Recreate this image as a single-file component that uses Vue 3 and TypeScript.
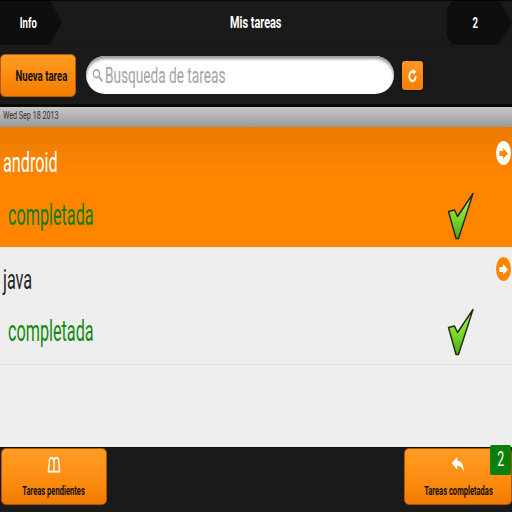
<template>
  <div class="page">
    <header class="header">
      <div class="nav-btn nav-info"><span class="squeeze">Info</span></div>
      <h1 class="title"><span class="squeeze">Mis tareas</span></h1>
      <div class="nav-btn nav-count"><span class="squeeze">2</span></div>
    </header>

    <div class="toolbar">
      <button class="new-btn"><span class="squeeze">Nueva tarea</span></button>
      <div class="search">
        <svg class="search-icon" viewBox="0 0 16 16" width="11" height="14" preserveAspectRatio="none">
          <circle cx="6.5" cy="6.5" r="4.5" fill="none" stroke="#a8a8a8" stroke-width="2" />
          <path d="M10 10l4.5 4.5" stroke="#a8a8a8" stroke-width="2.6" stroke-linecap="round" />
        </svg>
        <span class="search-text squeeze">Busqueda de tareas</span>
      </div>
      <button class="refresh-btn">
        <svg viewBox="0 0 14 18" width="9" height="17" preserveAspectRatio="none">
          <path d="M10.500 6.200A5 5 0 1 0 12 9.500" fill="none" stroke="#fff" stroke-width="2.6" />
          <path d="M7.600 1.500l5.200 3.600-4.800 3z" fill="#fff" />
        </svg>
      </button>
    </div>

    <div class="date-bar"><span class="squeeze">Wed Sep 18 2013</span></div>

    <ul class="tasks">
      <li v-for="task in tasks" :key="task.name" class="task" :class="{ active: task.active }">
        <div class="task-name"><span class="squeeze">{{ task.name }}</span></div>
        <div class="task-status">
          <span class="squeeze">completada</span>
          <svg class="check" viewBox="0 0 28 48" width="28" height="48">
            <defs>
              <linearGradient :id="'chk-' + task.name" x1="0" y1="0" x2="0" y2="1">
                <stop offset="0" stop-color="#b4f060" />
                <stop offset="0.6" stop-color="#74d326" />
                <stop offset="1" stop-color="#4aa915" />
              </linearGradient>
            </defs>
            <path d="M1.500 19.500l6-1.500 3 6.500L26 1.500 11.500 46.500h-2.500z" :fill="'url(#chk-' + task.name + ')'"
              stroke="#1d2a10" stroke-width="1.400" stroke-linejoin="round" />
          </svg>
        </div>
        <span class="arrow">
          <svg viewBox="0 0 12 12" width="11" height="13" preserveAspectRatio="none">
            <path d="M1.500 3.800h4V1L11 6l-5.500 5V8.200h-4z" :fill="task.active ? '#ff8a00' : '#fff'" />
          </svg>
        </span>
      </li>
    </ul>

    <footer class="footer">
      <button class="foot-btn">
        <svg viewBox="0 0 20 18" width="14" height="17" preserveAspectRatio="none">
          <path d="M10 5C9 1 4.500 1 3.500 4L2 16.500H18L16.500 4C15.500 1 11 1 10 5zM10 5v11.500" fill="none" stroke="#fff"
            stroke-width="2" stroke-linejoin="round" />
        </svg>
        <span class="squeeze">Tareas pendientes</span>
      </button>
      <button class="foot-btn foot-done">
        <svg viewBox="0 0 20 18" width="14" height="17" preserveAspectRatio="none">
          <path d="M1 7.500L9 1v4c6 0 9 4 9.500 12C16.500 12.500 13.500 10.500 9 10.500v4z" fill="#fff" />
        </svg>
        <span class="squeeze">Tareas completadas</span>
        <span class="badge"><span class="squeeze">2</span></span>
      </button>
    </footer>
  </div>
</template>

<script setup lang="ts">
const tasks: Array<{ name: string; active: boolean }> = [
  { name: 'android', active: true },
  { name: 'java', active: false },
];
</script>

<style>
html, body { margin: 0; background: #1a1a1a; }
</style>

<style scoped>
.page {
  width: 512px;
  height: 512px;
  display: flex;
  flex-direction: column;
  overflow: hidden;
  font-family: Roboto, "Liberation Sans", sans-serif;
  background: #1a1a1a;
}

.squeeze {
  display: inline-block;
  white-space: nowrap;
}

.header {
  height: 45px;
  display: flex;
  align-items: center;
  justify-content: space-between;
  box-sizing: border-box;
  border-top: 1px solid #050505;
  border-bottom: 1px solid #141414;
  color: #fff;
}

.nav-btn {
  height: 44px;
  background: #0e0e0e;
  display: flex;
  align-items: center;
  justify-content: center;
  font-size: 15px;
  font-weight: 700;
  box-sizing: border-box;
}

.nav-btn .squeeze {
  transform: scaleX(0.64);
}

.nav-info {
  width: 62px;
  padding-right: 6px;
  clip-path: polygon(0 0, 50px 0, 62px 22px, 50px 44px, 0 44px);
}

.nav-count {
  width: 65px;
  padding-right: 9px;
  clip-path: polygon(6px 0, 52px 0, 65px 22px, 52px 44px, 6px 44px, 0 36px, 0 8px);
}

.title {
  margin: 0 0 0 2px;
  font-size: 16px;
  font-weight: 700;
}

.title .squeeze {
  transform: scaleX(0.68);
}

.toolbar {
  height: 62px;
  box-sizing: border-box;
  padding-top: 9px;
  display: flex;
  align-items: flex-start;
  border-bottom: 3px solid #0a0a0a;
}

.new-btn {
  width: 76px;
  height: 43px;
  padding: 0 6px 0 0;
  border: 1px solid #b05c00;
  border-radius: 5px;
  background: linear-gradient(#ff9c26, #fb8a0c 55%, #f07c00);
  color: #111;
  font: 700 15px Roboto, sans-serif;
}

.new-btn .squeeze {
  transform: scaleX(0.64);
}

.search {
  width: 308px;
  height: 38px;
  margin: 2px 0 0 10px;
  box-sizing: border-box;
  padding-left: 6px;
  display: flex;
  align-items: center;
  background: #fff;
  border-radius: 19px;
  box-shadow: inset 0 3px 3px #9a9a9a;
}

.search-icon {
  flex: none;
}

.search-text {
  margin-left: 2px;
  color: #a4a4a4;
  font-size: 22px;
  transform: scaleX(0.62);
  transform-origin: left center;
}

.refresh-btn {
  width: 21px;
  height: 29px;
  margin: 7px 0 0 8px;
  padding: 0;
  border: none;
  border-radius: 3px;
  background: linear-gradient(#ff9622, #f57f05);
  box-shadow: 0 0 2px #000;
  display: flex;
  align-items: center;
  justify-content: center;
}

.date-bar {
  height: 20px;
  box-sizing: border-box;
  padding-left: 3px;
  background: linear-gradient(#c8c8c8, #9a9a9a);
  color: #333;
  font-size: 11px;
  line-height: 18px;
}

.date-bar .squeeze {
  transform: scaleX(0.65);
  transform-origin: left center;
}

.tasks {
  flex: 1;
  margin: 0;
  padding: 0;
  list-style: none;
  background: #eee;
}

.task {
  position: relative;
  height: 117px;
  box-sizing: border-box;
  padding: 14px 0 0 3px;
  border-bottom: 1px solid #dedede;
  background: #eeeeee;
  color: #222;
}

.task.active {
  height: 121px;
  padding-top: 18px;
  border-bottom: 1px solid #e8e8e8;
  background: linear-gradient(#e87b00, #ff8500 40%);
  color: #fff;
}

.task-name {
  font-size: 28px;
  line-height: 36px;
}

.task-name .squeeze {
  transform: scaleX(0.58);
  transform-origin: left center;
}

.task-status {
  height: 48px;
  margin-top: 8px;
  padding-left: 5px;
  padding-right: 37px;
  display: flex;
  align-items: center;
  justify-content: space-between;
  color: #128a12;
  font-size: 30px;
}

.task-status .squeeze {
  transform: scaleX(0.54);
  transform-origin: left center;
}

.task.active .task-status {
  color: #0d7c0a;
  margin-top: 9px;
}

.check {
  flex: none;
  margin-top: 4px;
}

.arrow {
  position: absolute;
  top: 9px;
  right: 1px;
  width: 15px;
  height: 24px;
  border-radius: 50%;
  background: #ff8400;
  box-shadow: 0 0 0 1px #f4f4f4;
  display: flex;
  align-items: center;
  justify-content: center;
}

.task.active .arrow {
  top: 14px;
  background: #fff;
  box-shadow: none;
}

.footer {
  height: 65px;
  box-sizing: border-box;
  padding-left: 1px;
  display: flex;
  justify-content: space-between;
  background: #1a1a1a;
  border-top: 1px solid #0c0c0c;
}

.foot-btn {
  position: relative;
  width: 106px;
  height: 57px;
  padding: 7px 0 0;
  border: 1px solid #a85800;
  border-radius: 5px;
  background: linear-gradient(#ff9b25, #fc8c10 60%, #ee7a00);
  color: #111;
  font: 700 12px Roboto, sans-serif;
  display: flex;
  flex-direction: column;
  align-items: center;
  gap: 11px;
}

.foot-btn .squeeze {
  transform: scaleX(0.63);
}

.foot-done {
  width: 108px;
}

.badge {
  position: absolute;
  top: -4px;
  right: 0;
  width: 21px;
  height: 30px;
  background: #0a7f0a;
  border-radius: 2px;
  color: #fff;
  font: 400 20px/28px Roboto, sans-serif;
  text-align: center;
}

.badge .squeeze {
  transform: scaleX(0.62);
}
</style>
